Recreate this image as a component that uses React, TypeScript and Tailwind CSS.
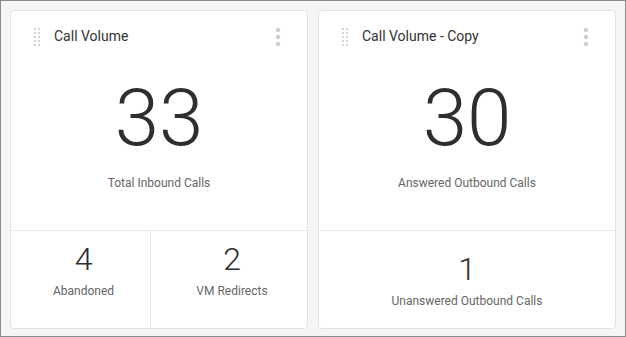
import React from 'react';

type Stat = { value: number; label: string };

const font = { fontFamily: 'Roboto, "Liberation Sans", sans-serif' };

const DragHandle: React.FC = () => (
  <svg width="8" height="20" viewBox="0 0 8 20" className="shrink-0">
    {[0, 1, 2, 3, 4].map((r) =>
      [0, 1].map((c) => (
        <rect key={`${r}-${c}`} x={1 + c * 4} y={1 + r * 4} width="2" height="2" fill="#d4d4d4" />
      ))
    )}
  </svg>
);

const Kebab: React.FC = () => (
  <svg width="6" height="20" viewBox="0 0 6 20" className="shrink-0">
    <circle cx="3" cy="3" r="2.2" fill="#cfcfcf" />
    <circle cx="3" cy="10" r="2.2" fill="#cfcfcf" />
    <circle cx="3" cy="17" r="2.2" fill="#cfcfcf" />
  </svg>
);

const Card: React.FC<{ title: string; main: Stat; sub: Stat[] }> = ({ title, main, sub }) => (
  <div className="w-[298px] h-[319px] bg-white border border-[#e3e3e3] rounded-[4px] flex flex-col">
    {/* header */}
    <div className="h-[51px] flex items-center pl-[22px] pr-[26px]">
      <DragHandle />
      <span className="ml-[13px] text-[14px] text-[#333] flex-1">{title}</span>
      <Kebab />
    </div>

    {/* main stat */}
    <div className="flex-1 flex flex-col items-center">
      <div className="mt-[16px] text-[80px] leading-[80px] font-light text-[#2e2e2e]">{main.value}</div>
      <div className="mt-[17px] text-[12px] leading-[16px] text-[#666]">{main.label}</div>
    </div>

    {/* sub stats */}
    <div className="h-[98px] border-t border-[#e8e8e8] flex">
      {sub.length > 1 ? (
        <>
          <div className="w-[139px] shrink-0 flex flex-col items-center pt-[12px] pl-[6px]">
            <div className="text-[32px] leading-[32px] font-light text-[#2e2e2e]">{sub[0].value}</div>
            <div className="mt-[8px] text-[12px] leading-[16px] text-[#666]">{sub[0].label}</div>
          </div>
          <div className="flex-1 flex flex-col items-center pt-[12px] pl-[6px] border-l border-[#e8e8e8]">
            <div className="text-[32px] leading-[32px] font-light text-[#2e2e2e]">{sub[1].value}</div>
            <div className="mt-[8px] text-[12px] leading-[16px] text-[#666]">{sub[1].label}</div>
          </div>
        </>
      ) : (
        <div className="flex-1 flex flex-col items-center pt-[22px]">
          <div className="text-[32px] leading-[32px] font-light text-[#2e2e2e]">{sub[0].value}</div>
          <div className="mt-[8px] text-[12px] leading-[16px] text-[#666]">{sub[0].label}</div>
        </div>
      )}
    </div>
  </div>
);

const App: React.FC = () => {
  return (
    <div
      style={font}
      className="w-[626px] h-[337px] border border-[#8a8a8a] bg-[#f5f5f5] pt-[9px] pl-[9px] flex gap-[10px] overflow-hidden"
    >
      <Card
        title="Call Volume"
        main={{ value: 33, label: 'Total Inbound Calls' }}
        sub={[
          { value: 4, label: 'Abandoned' },
          { value: 2, label: 'VM Redirects' },
        ]}
      />
      <Card
        title="Call Volume - Copy"
        main={{ value: 30, label: 'Answered Outbound Calls' }}
        sub={[{ value: 1, label: 'Unanswered Outbound Calls' }]}
      />
    </div>
  );
};

export default App;
